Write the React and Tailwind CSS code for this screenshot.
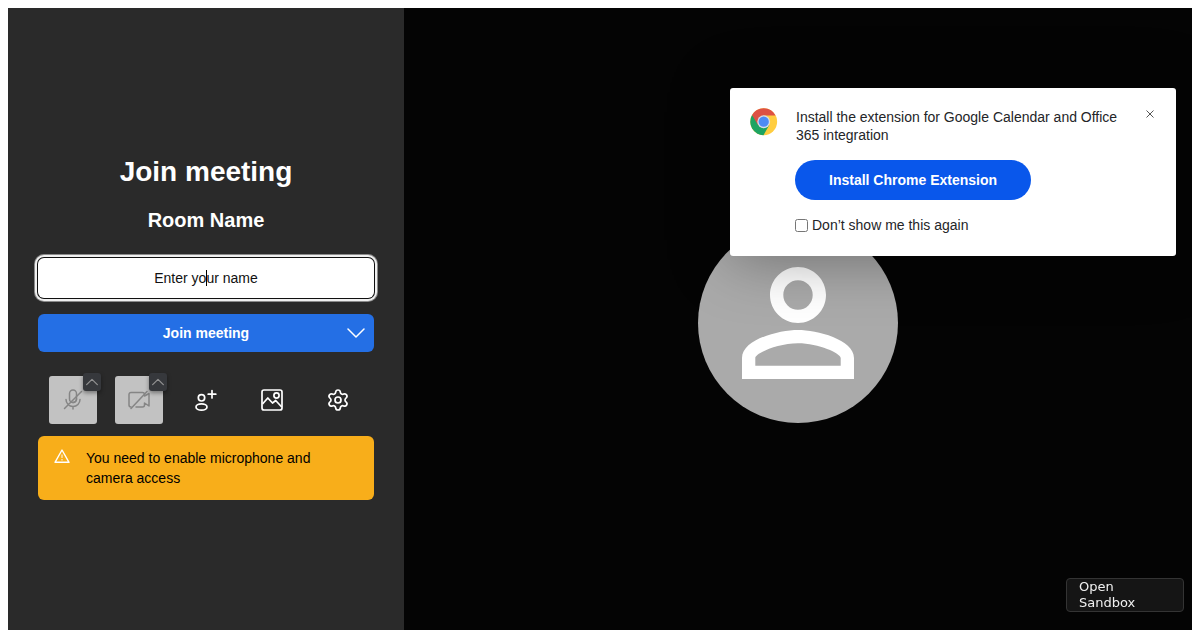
import React, { useState } from "react";
import { Settings } from "lucide-react";

function ChromeLogo() {
    return (
        <svg viewBox="0 0 48 48" className="size-7 shrink-0" aria-hidden="true">
            <circle cx="23.5" cy="23.5" r="23" fill="#ffcd40" />
            <path d="M23.5 23.5 33 29 23.100 46.500A23 23 0 0 1 3.500 12Z" fill="#1da462" />
            <path d="M3.500 12A23 23 0 0 1 44 13H23.500L14 29.500Z" fill="#dd5144" />
            <circle cx="23.5" cy="23.5" r="11" fill="#d9dde6" />
            <circle cx="23.5" cy="23.5" r="8.8" fill="#4c8bf5" />
        </svg>
    );
}

function MicOffIcon() {
    return (
        <svg viewBox="0 0 24 24" className="size-6" fill="none" stroke="currentColor" strokeWidth="1.5" strokeLinecap="round">
            <rect x="8.500" y="2" width="7" height="12.500" rx="3.500" />
            <path d="M5 11.500a7 7 0 0 0 14 0M12 18.500V21M12 14.500a3.500 3.500 0 0 0 3.500-3.500M3.500 20.500 20.500 3.500" />
        </svg>
    );
}

function CameraOffIcon() {
    return (
        <svg viewBox="0 0 24 24" className="size-6" fill="none" stroke="currentColor" strokeWidth="1.5" strokeLinecap="round" strokeLinejoin="round">
            <path d="M4 19a2 2 0 0 1-2-2V6.500a2 2 0 0 1 2-2h11.500a2 2 0 0 1 2 2v1.500l4.500-2.500v12.500l-4.500-3v2a2 2 0 0 1-2 2H9" />
            <path d="M4 20.500 20 3.500" />
        </svg>
    );
}

function InviteIcon() {
    return (
        <svg viewBox="0 0 24 24" className="size-6" fill="none" stroke="currentColor" strokeWidth="1.7" strokeLinecap="round">
            <circle cx="7.500" cy="9.800" r="3.200" />
            <ellipse cx="7.500" cy="19" rx="5.500" ry="3.200" />
            <path d="M18 2.500v7.500M14.200 6.200h7.600" />
        </svg>
    );
}

function ImageIcon() {
    return (
        <svg viewBox="0 0 24 24" className="size-6" fill="none" stroke="currentColor" strokeWidth="1.7" strokeLinejoin="round">
            <rect x="2" y="2" width="20" height="20" rx="2" />
            <circle cx="16.500" cy="7.500" r="2.600" />
            <path d="m2.500 16 5.300-6 4.700 5 3.200-2.500 6 6.500" />
        </svg>
    );
}

function Chevron({ className, up }) {
    return (
        <svg viewBox="0 0 18 12" className={className} fill="none" stroke="currentColor" strokeWidth={up ? 1.8 : 1.5} strokeLinecap="round" strokeLinejoin="round">
            <path d={up ? "M1 10 9 2l8 8" : "M1 2l8 8 8-8"} />
        </svg>
    );
}

function DisabledDevice({ label, children }) {
    return (
        <div className="relative size-12">
            <button
                type="button"
                aria-label={label}
                className="flex size-12 items-center justify-center rounded-[3px] bg-[#c2c2c2] text-[#858585]"
            >
                {children}
            </button>
            <button
                type="button"
                aria-label={`${label} settings`}
                className="absolute -top-[3px] -right-1 flex size-[18px] items-center justify-center rounded-[3px] bg-[#36383c] text-[#929292] shadow-[0_2px_4px_rgba(0,0,0,0.4)]"
            >
                <Chevron up className="h-2 w-3" />
            </button>
        </div>
    );
}

function ToolButton({ label, children }) {
    return (
        <button type="button" aria-label={label} className="flex size-12 items-center justify-center text-white">
            {children}
        </button>
    );
}

function Prejoin() {
    const [name, setName] = useState("");

    return (
        <section className="flex w-[396px] shrink-0 flex-col justify-center bg-[#2a2a2a] px-[30px]">
            <h1 className="text-center text-[28px] leading-[52px] font-bold text-white">Join meeting</h1>
            <h2 className="mt-2 mb-6 text-center text-xl leading-7 font-bold text-white">Room Name</h2>

            <div className="relative">
                <input
                    type="text"
                    aria-label="Enter your name"
                    placeholder="Enter your name"
                    value={name}
                    onChange={(e) => setName(e.target.value)}
                    className="block h-10 w-full rounded-md bg-white text-center text-sm text-[#111] caret-transparent shadow-[0_0_0_1px_#101010,0_0_0_3px_#f0f0f0,0_0_0_4px_#8b8b8b] outline-none placeholder:text-[#111]"
                />
                {!name && <span className="absolute top-3 left-1/2 h-4 w-px bg-black" />}
            </div>

            <button
                type="button"
                className="relative mt-4 h-[38px] rounded-md bg-[#246fe5] text-sm font-bold text-white"
            >
                Join meeting
                <Chevron className="absolute top-[13px] right-[9px] h-3 w-[18px]" />
            </button>

            <div className="mt-6 flex justify-between pr-3 pl-[11px]">
                <DisabledDevice label="Microphone">
                    <MicOffIcon />
                </DisabledDevice>
                <DisabledDevice label="Camera">
                    <CameraOffIcon />
                </DisabledDevice>
                <ToolButton label="Invite people">
                    <InviteIcon />
                </ToolButton>
                <ToolButton label="Select background">
                    <ImageIcon />
                </ToolButton>
                <ToolButton label="Settings">
                    <Settings className="size-6" strokeWidth={1.7} />
                </ToolButton>
            </div>

            <div className="mt-3 flex gap-4 rounded-md bg-[#f8ae1a] px-4 py-3 text-sm leading-5 text-black">
                <svg viewBox="0 0 16 16" className="size-4 shrink-0" fill="none" stroke="#fff" strokeWidth="1.400" strokeLinejoin="round">
                    <path d="M8 2 15 14.300H1Z" />
                    <path d="M8 6.500v3.500M8 11v1.500" strokeOpacity="0.7" />
                </svg>
                <p className="pr-8">You need to enable microphone and camera access</p>
            </div>
        </section>
    );
}

function ExtensionBanner({ onClose }) {
    return (
        <div className="absolute top-20 right-2 flex w-[446px] items-start rounded-[3px] bg-white p-5 text-sm leading-[18px] text-[#242528] shadow-[0_4px_60px_rgba(0,0,0,0.35)] sm:right-4">
            <ChromeLogo />
            <div className="ml-[17px] flex flex-1 flex-col items-start">
                <p className="pl-px">Install the extension for Google Calendar and Office 365 integration</p>
                <button type="button" className="mt-4 h-10 rounded-full bg-[#0957eb] px-[34px] font-bold text-white">
                    Install Chrome Extension
                </button>
                <label className="mt-4 mb-0.5 flex items-center gap-1">
                    <input type="checkbox" className="size-[13px]" />
                    Don’t show me this again
                </label>
            </div>
            <button type="button" aria-label="Close" onClick={onClose} className="ml-2 p-px text-[#555]">
                <svg viewBox="0 0 10 10" className="size-2.5" fill="none" stroke="currentColor" strokeWidth="1">
                    <path d="m1.500 1.500 7 7M8.500 1.500l-7 7" />
                </svg>
            </button>
        </div>
    );
}

function App() {
    const [showBanner, setShowBanner] = useState(true);

    return (
        <div className="h-screen overflow-hidden bg-white px-2 pt-2 font-['Liberation_Sans',Arial,sans-serif]">
            <main className="relative flex h-screen overflow-hidden">
                <Prejoin />
                <section className="flex flex-1 items-center justify-center bg-[#040404]">
                    <div className="flex size-[200px] items-center justify-center rounded-full bg-[#aaa]">
                        <svg viewBox="0 0 24 24" className="size-[168px]" fill="#fff">
                            <path d="M12 5.900a2.100 2.100 0 1 1 0 4.200 2.100 2.100 0 0 1 0-4.200m0 9c2.970 0 6.100 1.460 6.100 2.100v1.100H5.900V17c0-.64 3.130-2.100 6.100-2.100M12 4C9.790 4 8 5.790 8 8s1.790 4 4 4 4-1.790 4-4-1.790-4-4-4zm0 9c-2.670 0-8 1.340-8 4v3h16v-3c0-2.660-5.330-4-8-4z" />
                        </svg>
                    </div>
                </section>
                {showBanner && <ExtensionBanner onClose={() => setShowBanner(false)} />}
            </main>
            <button
                type="button"
                className="fixed right-4 bottom-[18px] w-[118px] rounded-[4px] border border-[#343434] bg-[#151515] px-3 text-left font-['DejaVu_Sans',sans-serif] text-[13px] leading-4 text-[#f0f0f0]"
            >
                Open Sandbox
            </button>
        </div>
    );
}

export default App;
